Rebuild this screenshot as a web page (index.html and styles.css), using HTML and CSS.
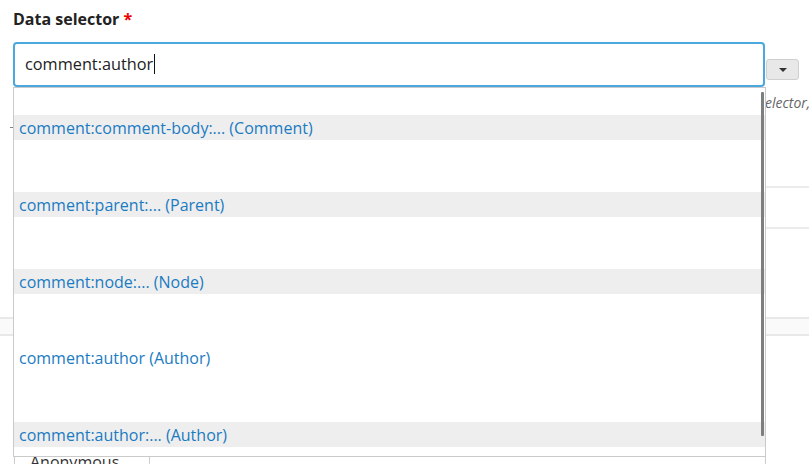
FILE: index.html
```html
<!DOCTYPE html>
<html lang="en">
<head>
<meta charset="utf-8">
<title>Data selector</title>
<link rel="stylesheet" href="styles.css">
</head>
<body>
<div class="page">
  <div class="form-item">
    <label class="label">Data selector <span class="req">*</span></label>
    <div class="field-row">
      <div class="input">comment:author<span class="caret"></span></div>
      <button class="toggle" type="button"><span class="tri"></span></button>
    </div>
    <div class="description"><span class="lead">The data selector helps you drill down into the data available to Rules. To make entity fields appear in the data s</span>elector, you may have to use the condition 'entity has field'.</div>
  </div>
  <div class="dash"></div>
  <div class="tabs"></div>
  <div class="band"></div>
  <table class="users">
    <tr><td class="cell">Anonymous</td><td class="cell wide"></td></tr>
  </table>

  <div class="dropdown">
    <ul class="items">
      <li class="item hl">comment:comment-body:... (Comment)</li>
      <li class="item hl">comment:parent:... (Parent)</li>
      <li class="item hl">comment:node:... (Node)</li>
      <li class="item">comment:author (Author)</li>
      <li class="item hl">comment:author:... (Author)</li>
    </ul>
    <div class="thumb"></div>
  </div>
</div>
</body>
</html>
```

FILE: styles.css
```css
html, body {
  margin: 0;
  padding: 0;
  background: #fff;
  overflow: hidden;
}
body {
  font-family: "Open Sans", "Noto Sans", sans-serif;
  color: #222;
  width: 809px;
  height: 464px;
}
.page {
  position: relative;
  width: 809px;
  height: 464px;
  overflow: hidden;
}
.form-item {
  padding-left: 13px;
}
.label {
  display: block;
  padding-top: 9px;
  height: 20px;
  line-height: 21px;
  font-size: 16px;
  font-weight: 700;
  color: #222;
  margin-bottom: 13px;
}
.req {
  color: #e00;
}
.field-row {
  display: flex;
  align-items: flex-start;
}
.input {
  box-sizing: border-box;
  width: 752px;
  height: 45px;
  border: 2px solid #4ba8df;
  border-radius: 4px;
  padding-left: 10px;
  font-size: 16.3px;
  line-height: 41px;
  color: #222;
  white-space: nowrap;
}
.caret {
  display: inline-block;
  width: 1px;
  height: 20px;
  background: #111;
  vertical-align: -4px;
  margin-left: 1px;
}
.toggle {
  box-sizing: border-box;
  margin: 17px 0 0 1px;
  width: 33px;
  height: 21px;
  padding: 0;
  background: #e8e8e8;
  border: 1px solid #cfcfcf;
  border-radius: 3px;
  display: flex;
  align-items: center;
  justify-content: center;
}
.tri {
  width: 0;
  height: 0;
  border-left: 4px solid transparent;
  border-right: 4px solid transparent;
  border-top: 4px solid #333;
}
.description {
  margin-top: 7px;
  height: 16px;
  font-size: 14px;
  line-height: 17px;
  font-style: italic;
  color: #666;
  white-space: nowrap;
}
.lead {
  display: inline-block;
  width: 752px;
  overflow: hidden;
  vertical-align: bottom;
}
.dash {
  margin: 17px 0 0 10px;
  width: 3px;
  height: 1px;
  background: #8a7f70;
}
.tabs {
  margin: 58px 0 0 13px;
  height: 39px;
  border-top: 2px solid #ebebeb;
  border-bottom: 2px solid #ebebeb;
}
.band {
  margin-top: 88px;
  height: 15px;
  background: #fafafa;
  border-top: 2px solid #e8e8e8;
  border-bottom: 2px solid #e8e8e8;
}
.users {
  margin: 117px 0 0 14px;
  border-collapse: collapse;
}
.cell {
  border: 1px solid #cccccc;
  padding: 0 0 0 15px;
  width: 119px;
  height: 28px;
  vertical-align: top;
  font-size: 16px;
  line-height: 16px;
  color: #333;
}
.cell.wide {
  width: 600px;
}
.dropdown {
  position: absolute;
  left: 13px;
  top: 87px;
  box-sizing: border-box;
  width: 753px;
  height: 370px;
  background: #fff;
  border: 1px solid #cacaca;
  overflow: hidden;
}
.items {
  list-style: none;
  margin: 0;
  padding: 27px 0 0 0;
}
.item {
  height: 25px;
  line-height: 27px;
  padding-left: 5px;
  margin-bottom: 51.75px;
  font-size: 16px;
  color: #1b7bc2;
  white-space: nowrap;
}
.item.hl {
  background: #eeeeee;
}
.thumb {
  position: absolute;
  right: 1px;
  top: 4px;
  width: 3px;
  height: 344px;
  background: #7b7f7d;
  border-radius: 1px;
}
```
